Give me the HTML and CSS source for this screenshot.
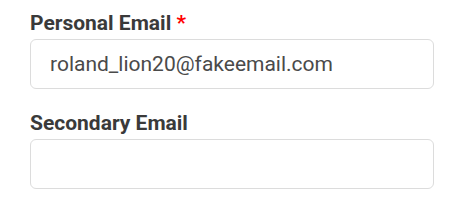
FILE: index.html
```html
<!DOCTYPE html>
<html lang="en">
<head>
    <meta charset="UTF-8">
    <meta name="viewport" content="width=device-width, initial-scale=1.0">
    <title>Email Details</title>
    <link rel="stylesheet" href="styles.css">
</head>
<body>

    <form class="email-form">
        <div class="form-group">
            <label for="personal-email">Personal Email <span class="required">*</span></label>
            <input type="email" id="personal-email" value="roland_lion20@fakeemail.com">
        </div>

        <div class="form-group">
            <label for="secondary-email">Secondary Email</label>
            <input type="email" id="secondary-email">
        </div>
    </form>

</body>
</html>
```

FILE: styles.css
```css
body {
    font-family: Roboto, "Liberation Sans", Arial, sans-serif;
    background-color: #ffffff;
    margin: 0;
    padding: 11px 0 0 30px;
}

.form-group {
    width: 404px;
    margin-bottom: 22px;
}

.form-group label {
    display: block;
    font-size: 21px;
    font-weight: bold;
    line-height: 24px;
    color: #3a3a3a;
    margin-bottom: 4px;
}

.required {
    color: #ff0000;
}

.form-group input {
    display: block;
    box-sizing: border-box;
    width: 100%;
    height: 50px;
    padding: 0 19px;
    font-family: Roboto, "Liberation Sans", Arial, sans-serif;
    font-size: 21px;
    color: #4a4a4a;
    border: 1px solid #dcdcdc;
    border-radius: 6px;
    outline: none;
}
```
